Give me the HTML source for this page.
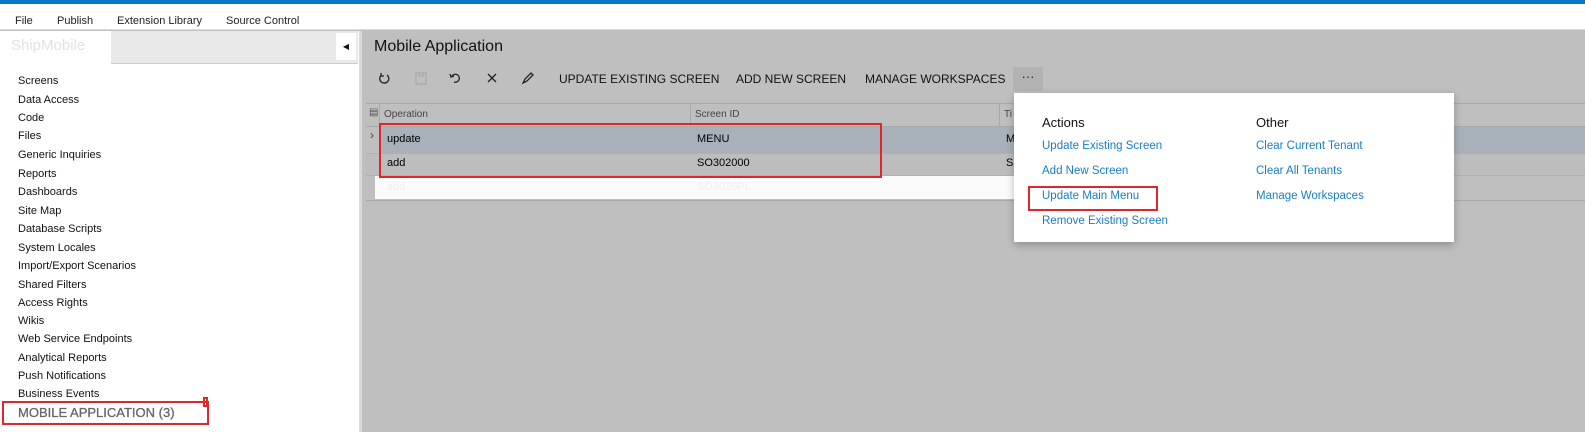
<!DOCTYPE html>
<html><head><meta charset="utf-8"><style>
*{margin:0;padding:0;box-sizing:border-box}
body{width:1585px;height:432px;overflow:hidden;position:relative;background:#bfbfbf;font-family:"Liberation Sans",Arial,sans-serif;}
.a{position:absolute}
.menu span{position:absolute;top:11px;font-size:11px;color:#222}
.side div{position:absolute;left:18px;font-size:11px;color:#111}
.tb{position:absolute;top:72px;font-size:12px;color:#111}
.grid{font-size:11px;color:#000}
.dd a{position:absolute;font-size:11.5px;color:#1a7dc4;text-decoration:none}
.red{position:absolute;border:2px solid #e0262b}
</style></head><body>
<div class="a" style="left:0;top:0;width:1585px;height:4px;background:#0a78c8"></div>
<div class="a menu" style="left:0;top:4px;width:1585px;height:26px;background:#fff;border-bottom:1px solid #ddd">
<span style="left:15px">File</span><span style="left:57px">Publish</span><span style="left:117px">Extension Library</span><span style="left:226px">Source Control</span></div>
<!-- sidebar -->
<div class="a" style="left:0;top:31px;width:362px;height:401px;background:#fff;border-right:3px solid #d9d9d9"></div>
<div class="a" style="left:0;top:31px;width:358px;height:33px;background:#e9e9e9;border-bottom:1px solid #ccc"></div>
<div class="a" style="left:0;top:31px;width:111px;height:34px;background:#fff;font-size:15px;color:#e2e2e2;padding:6px 0 0 11px">ShipMobile</div>
<div class="a" style="left:336px;top:33px;width:20px;height:27px;background:#fff;font-size:8px;line-height:27px;text-align:center;color:#111">◀</div>
<div class="side">
<div style="top:75px">Screens</div><div style="top:94px">Data Access</div><div style="top:112px">Code</div><div style="top:130px">Files</div><div style="top:149px">Generic Inquiries</div><div style="top:168px">Reports</div><div style="top:186px">Dashboards</div><div style="top:205px">Site Map</div><div style="top:223px">Database Scripts</div><div style="top:242px">System Locales</div><div style="top:260px">Import/Export Scenarios</div><div style="top:279px">Shared Filters</div><div style="top:297px">Access Rights</div><div style="top:315px">Wikis</div><div style="top:333px">Web Service Endpoints</div><div style="top:352px">Analytical Reports</div><div style="top:370px">Push Notifications</div><div style="top:388px">Business Events</div>
<div style="top:405px;font-size:13px;color:#666;-webkit-text-stroke:0.3px #666">MOBILE APPLICATION (3)</div></div>
<div class="red" style="left:2px;top:401px;width:207px;height:24px"></div>
<div class="red" style="left:203px;top:397px;width:5px;height:10px"></div>
<!-- main -->
<div class="a" style="left:374px;top:38px;font-size:16px;color:#111">Mobile Application</div>
<svg class="a" style="left:376px;top:70px" width="160" height="16" viewBox="0 0 160 16" fill="none" stroke="#222" stroke-width="1.3">
<path d="M11 5 A4.5 4.5 0 1 1 5 5.5"/><path d="M5 3 L5 6 L8 6" />
<rect x="40" y="3" width="10" height="11" stroke="#aaa"/><path d="M43 3v3h4V3" stroke="#aaa"/>
<path d="M76 6 A4 4 0 1 1 78 12"/><path d="M74 4 L75 7 L78 6"/>
<path d="M112 4l8 8M120 4l-8 8"/>
<path d="M147 13l2-4 6-6 2 2-6 6z"/>
</svg>
<div class="tb" style="left:559px">UPDATE EXISTING SCREEN</div>
<div class="tb" style="left:736px">ADD NEW SCREEN</div>
<div class="tb" style="left:865px">MANAGE WORKSPACES</div>
<div class="a" style="left:1013px;top:67px;width:30px;height:24px;background:#b3b3b3;font-size:13px;text-align:center;line-height:20px;color:#222">···</div>
<!-- grid -->
<div class="a" style="left:366px;top:103px;width:1219px;height:98px;border-top:1px solid #a8a8a8;border-bottom:1px solid #a8a8a8"></div>
<div class="a" style="left:366px;top:103px;width:1219px;height:24px;border-bottom:1px solid #aaa"></div>
<div class="a" style="left:380px;top:127px;width:1205px;height:26px;background:#a8b1b9"></div>
<div class="a" style="left:366px;top:153px;width:1219px;height:23px;background:#bdbdbd;border-top:1px solid #b0b0b0;border-bottom:1px solid #b0b0b0"></div>
<div class="a" style="left:375px;top:176px;width:640px;height:23px;background:#fbfbfb"></div>
<div class="a" style="left:379px;top:103px;width:1px;height:24px;background:#aaa"></div>
<div class="a" style="left:690px;top:103px;width:1px;height:24px;background:#aaa"></div>
<div class="a" style="left:999px;top:103px;width:1px;height:24px;background:#aaa"></div>
<div class="a grid" style="left:369px;top:107px;font-size:10px;color:#555">▤</div>
<div class="a grid" style="left:384px;top:109px;font-size:10px;color:#444">Operation</div>
<div class="a grid" style="left:695px;top:109px;font-size:10px;color:#444">Screen ID</div>
<div class="a grid" style="left:1004px;top:109px;font-size:10px;color:#444">Ti</div>
<div class="a grid" style="left:370px;top:128px;font-size:12px;color:#444">›</div>
<div class="a grid" style="left:387px;top:133px">update</div>
<div class="a grid" style="left:697px;top:133px">MENU</div>
<div class="a grid" style="left:1006px;top:133px">M</div>
<div class="a grid" style="left:387px;top:157px">add</div>
<div class="a grid" style="left:697px;top:157px">SO302000</div>
<div class="a grid" style="left:1006px;top:157px">S</div>
<div class="a grid" style="left:387px;top:181px;color:#eee">add</div>
<div class="a grid" style="left:697px;top:181px;color:#eee">SO3020PL</div>
<div class="red" style="left:379px;top:123px;width:503px;height:55px"></div>
<!-- dropdown -->
<div class="a dd" style="left:1014px;top:93px;width:440px;height:149px;background:#fff;box-shadow:0 3px 8px rgba(0,0,0,.25)">
<div style="position:absolute;left:28px;top:22px;font-size:13px;color:#111">Actions</div>
<div style="position:absolute;left:242px;top:22px;font-size:13px;color:#111">Other</div>
<a style="left:28px;top:47px">Update Existing Screen</a>
<a style="left:28px;top:72px">Add New Screen</a>
<a style="left:28px;top:97px">Update Main Menu</a>
<a style="left:28px;top:122px">Remove Existing Screen</a>
<a style="left:242px;top:47px">Clear Current Tenant</a>
<a style="left:242px;top:72px">Clear All Tenants</a>
<a style="left:242px;top:97px">Manage Workspaces</a>
</div>
<div class="red" style="left:1028px;top:186px;width:130px;height:25px"></div>
</body></html>
